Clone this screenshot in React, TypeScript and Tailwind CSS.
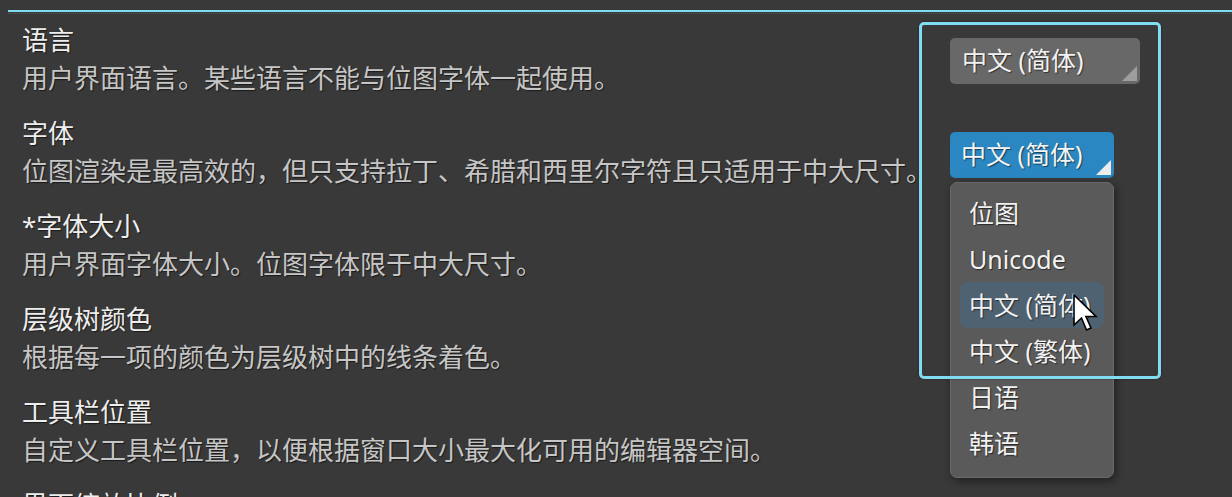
import React from "react";

const font = { fontFamily: '"Noto Sans", "Noto Sans CJK SC", sans-serif' };

const rows = [
  { title: "语言", desc: "用户界面语言。某些语言不能与位图字体一起使用。" },
  { title: "字体", desc: "位图渲染是最高效的，但只支持拉丁、希腊和西里尔字符且只适用于中大尺寸。" },
  { title: "*字体大小", desc: "用户界面字体大小。位图字体限于中大尺寸。" },
  { title: "层级树颜色", desc: "根据每一项的颜色为层级树中的线条着色。" },
  { title: "工具栏位置", desc: "自定义工具栏位置，以便根据窗口大小最大化可用的编辑器空间。" },
  { title: "界面缩放比例", desc: "" },
];

const items = ["位图", "Unicode", "中文 (简体)", "中文 (繁体)", "日语", "韩语"];

function Corner({ color }: { color: string }) {
  return (
    <svg className="absolute right-[3px] bottom-[3px]" width="15" height="15" viewBox="0 0 15 15">
      <path d="M15 0 L15 15 L0 15 Z" fill={color} />
    </svg>
  );
}

export default function App() {
  return (
    <div
      className="relative w-[1232px] h-[497px] overflow-hidden bg-[#393939] text-[25px] [text-shadow:1px_1px_1px_rgba(0,0,0,0.55)]"
      style={font}
    >
      <div className="mt-[10px] ml-[8px] h-[2px] bg-[#7fdcef]" />
      <div className="ml-[8px] h-[2px] border-b border-dotted border-[#555]" />
      <div className="flex flex-col pt-[7px]">
        {rows.map((r, i) => (
          <div key={i} className="flex h-[93px]">
            <div className="w-[928px] pl-[22px] shrink-0 text-[26px]">
              <div className="h-[38px] leading-[38px] text-[#eeeeee] whitespace-nowrap">{r.title}</div>
              <div className="h-[38px] leading-[38px] text-[#c6c6c6] whitespace-nowrap">{r.desc}</div>
            </div>
            <div className="pl-[22px]">
              {i === 0 && (
                <div className="relative mt-[17px] w-[190px] h-[46px] rounded-[5px] bg-[#686868] pl-[12px] leading-[45px] text-[#f2f2f2]">
                  中文 (简体)
                  <Corner color="#9e9e9e" />
                </div>
              )}
              {i === 1 && (
                <div className="relative mt-[18px] w-[164px] h-[46px] rounded-[5px] bg-[#2a87c1] pl-[11px] leading-[45px] text-[#f5f5f5]">
                  中文 (简体)
                  <Corner color="#ececec" />
                </div>
              )}
            </div>
          </div>
        ))}
      </div>

      {/* popup menu */}
      <div className="absolute left-[950px] top-[182px] w-[164px] h-[296px] rounded-[7px] border border-[#6a6a6a] bg-[#5a5a5a] pt-[7px] shadow-[2px_3px_8px_rgba(0,0,0,0.45)]">
        {items.map((it, i) => (
          <div
            key={it}
            className={
              "mx-[9px] h-[46px] leading-[46px] pl-[9px] rounded-[8px] text-[#f2f2f2] whitespace-nowrap " +
              (i === 2 ? "bg-[#4f6272]" : "")
            }
          >
            {it}
          </div>
        ))}
      </div>

      {/* focus highlight */}
      <div className="absolute left-[919px] top-[22px] w-[242px] h-[357px] rounded-[5px] border-[3px] border-[#80dcf1] shadow-[0_0_2px_rgba(0,0,0,0.6)]" />

      {/* mouse cursor */}
      <svg className="absolute left-[1073px] top-[294px]" width="26" height="40" viewBox="-1 -1 26 40">
        <path
          d="M0 0 L0 30 L7.5 23 L12.5 35 L17 33 L12 21.5 L22 21.5 Z"
          fill="#ffffff"
          stroke="#000000"
          strokeWidth="1.6"
          strokeLinejoin="miter"
        />
      </svg>
    </div>
  );
}
